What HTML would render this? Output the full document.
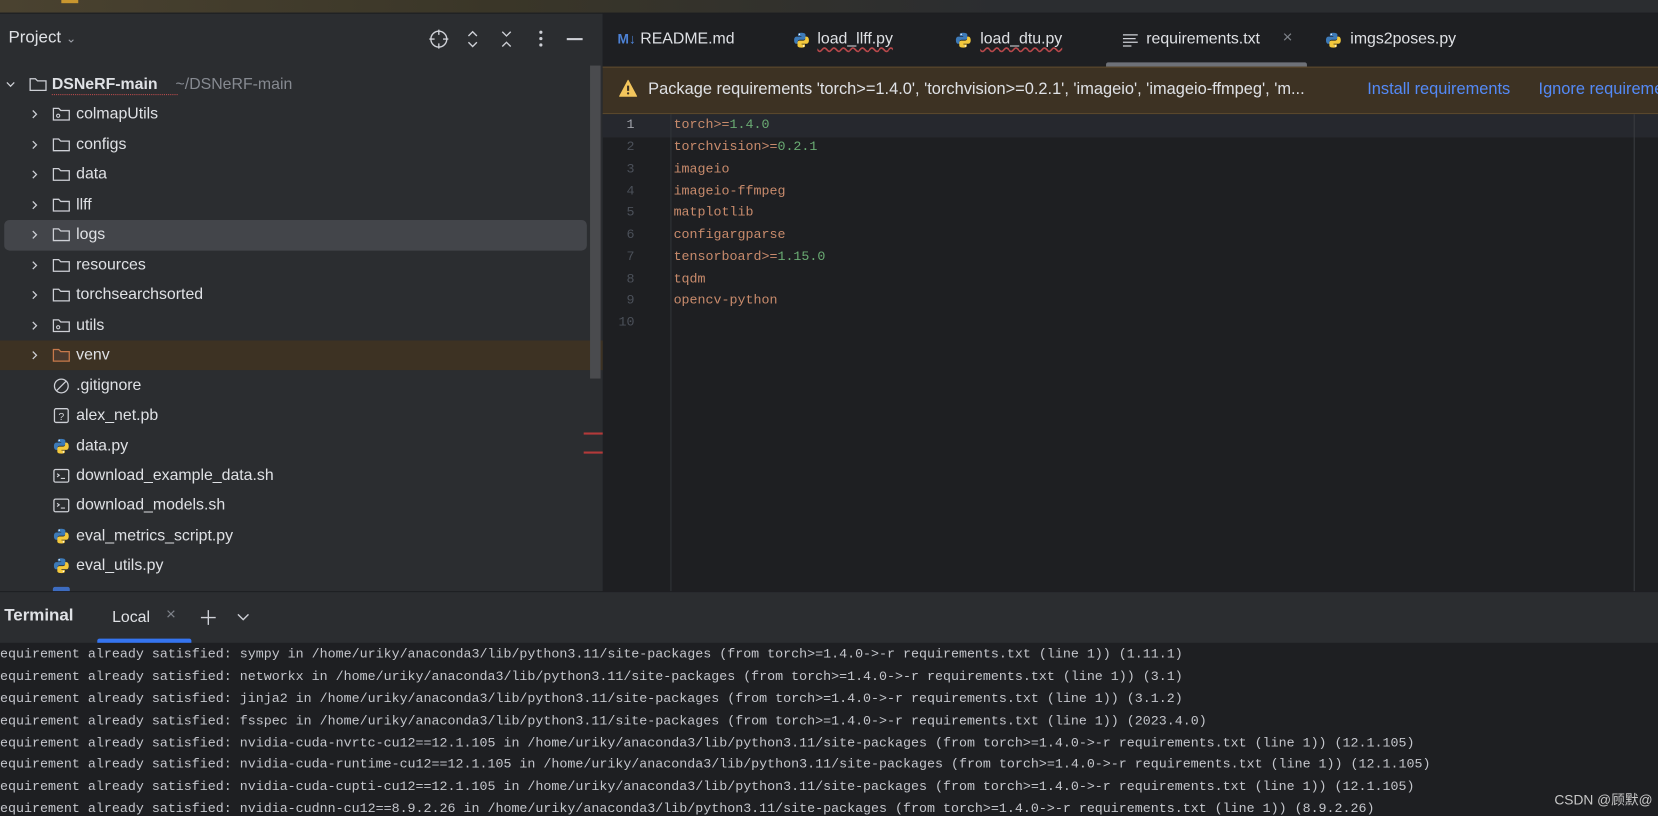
<!DOCTYPE html>
<html><head><meta charset="utf-8"><style>
*{margin:0;padding:0;box-sizing:border-box}
body{width:1658px;height:815px;overflow:hidden;background:#1e1f22;font-family:"Liberation Sans","Noto Sans CJK SC",sans-serif;color:#dfe1e5;position:relative}
#w{position:absolute;left:0;top:0;width:1568px;height:771px;transform:scale(1.0574);transform-origin:0 0}
.a{position:absolute;white-space:nowrap}
.side{left:0;top:13px;width:570px;height:547px;background:#2b2d30}
.row{position:absolute;left:0;width:570px;height:28px;font-size:15px;line-height:28px}
.row svg{position:absolute;top:6px}
.mono{font-family:"Liberation Mono",monospace;font-size:12.6px}
.code{left:637px;color:#c88b6c}
.num{color:#6aab73}
.ln{left:570px;width:30px;text-align:right;color:#4b5059}
.term{left:0;font-family:"Liberation Mono",monospace;font-size:12.6px;color:#c4c6cc}
.tab{top:28px;font-size:15px;color:#dfe1e5}
</style></head><body>
<svg width="0" height="0" style="position:absolute">
<defs>
<symbol id="fold" viewBox="0 0 18 16"><path d="M1.5 2.5h5l2 2h8v9h-15z" fill="none" stroke="#ced0d6" stroke-width="1.2"/></symbol>
<symbol id="foldo" viewBox="0 0 18 16"><path d="M1.5 2.5h5l2 2h8v9h-15z" fill="#4a3a2e" stroke="#c7794b" stroke-width="1.2"/></symbol>
<symbol id="folds" viewBox="0 0 18 16"><path d="M1.5 2.5h5l2 2h8v9h-15z" fill="none" stroke="#ced0d6" stroke-width="1.2"/><circle cx="6" cy="9.5" r="1.5" fill="none" stroke="#ced0d6"/></symbol>
<symbol id="chev" viewBox="0 0 10 10"><path d="M3 1.5l3.5 3.5-3.5 3.5" fill="none" stroke="#ced0d6" stroke-width="1.2"/></symbol>
<symbol id="py" viewBox="0 0 16 16"><path d="M7.8 1C4.5 1 4.7 2.4 4.7 2.4V4h3.2v.6H3.4S1 4.3 1 7.9s2.1 3.5 2.1 3.5h1.3V9.7s-.1-2.1 2-2.1h3.4s2 0 2-1.9V2.9S12.1 1 7.8 1z" fill="#3d7ab8"/><path d="M8.2 15c3.3 0 3.1-1.4 3.1-1.4V12H8.1v-.6h4.5S15 11.7 15 8.1s-2.1-3.5-2.1-3.5h-1.3v1.7s.1 2.1-2 2.1H6.2s-2 0-2 1.9v2.8S3.9 15 8.2 15z" fill="#f3c83c"/><circle cx="6" cy="2.5" r=".7" fill="#fff"/><circle cx="10" cy="13.5" r=".7" fill="#fff"/></symbol>
<symbol id="sh" viewBox="0 0 16 16"><rect x="1" y="2" width="14" height="12" rx="1.5" fill="none" stroke="#ced0d6" stroke-width="1.2"/><path d="M4 6l2 1.5L4 9M7.5 10.5h4" fill="none" stroke="#ced0d6" stroke-width="1.1"/></symbol>
</defs></svg>
<div id="w">
<div class="a" style="left:0;top:0;width:1568px;height:12px;background:linear-gradient(90deg,#4a4230,#3a3628 30%,#2b2d30 60%,#2b2d30)"></div>
<div class="a" style="left:58px;top:0;width:16px;height:3px;background:#c9962f"></div>
<div class="a" style="left:0;top:12px;width:1568px;height:1px;background:#1e1f22"></div>

<div class="a side"></div>
<div class="a" style="left:8px;top:27px;font-size:16px;color:#dfe1e5">Project <span style="font-size:12px;color:#9da0a8">&#8964;</span></div>
<svg class="a" style="left:405px;top:27px" width="20" height="20" viewBox="0 0 20 20"><circle cx="10" cy="10" r="7.5" fill="none" stroke="#ced0d6" stroke-width="1.3"/><path d="M10 1v5M10 14v5M1 10h5M14 10h5" stroke="#ced0d6" stroke-width="1.3"/></svg>
<svg class="a" style="left:440px;top:28px" width="14" height="18" viewBox="0 0 14 18"><path d="M3 6l4-4 4 4M3 12l4 4 4-4" fill="none" stroke="#ced0d6" stroke-width="1.3"/></svg>
<svg class="a" style="left:472px;top:28px" width="14" height="18" viewBox="0 0 14 18"><path d="M3 2l4 4 4-4M3 16l4-4 4 4" fill="none" stroke="#ced0d6" stroke-width="1.3"/></svg>
<div class="a" style="left:510px;top:29px;width:3px;height:3px;background:#ced0d6;border-radius:2px;box-shadow:0 6px 0 #ced0d6,0 12px 0 #ced0d6"></div>
<div class="a" style="left:536px;top:36px;width:15px;height:1.5px;background:#ced0d6"></div>

<div class="a" style="left:4px;top:208px;width:551px;height:29px;background:#43454a;border-radius:5px"></div>
<div class="a" style="left:0;top:322px;width:570px;height:28px;background:#3d3223"></div>
<div class="a" style="left:558px;top:62px;width:10px;height:296px;background:#4a4b4e"></div>
<div class="a" style="left:552px;top:409px;width:18px;height:2px;background:#b33a3a"></div>
<div class="a" style="left:552px;top:427px;width:18px;height:2px;background:#b33a3a"></div>

<div class="row" style="top:66px"><svg style="left:5px;top:9px;transform:rotate(90deg)" width="10" height="10"><use href="#chev"/></svg><svg style="left:27px" width="18" height="16"><use href="#fold"/></svg><span class="a" style="left:49px;font-weight:bold">DSNeRF-main</span><span class="a" style="left:166px;color:#868a91">~/DSNeRF-main</span><div class="a" style="left:49px;top:22px;width:119px;height:2px;border-bottom:1px dotted #c94f4f"></div></div>
<div class="row" style="top:94px"><svg style="left:28px;top:9px" width="10" height="10"><use href="#chev"/></svg><svg style="left:49px" width="18" height="16"><use href="#folds"/></svg><span class="a" style="left:72px">colmapUtils</span></div>
<div class="row" style="top:123px"><svg style="left:28px;top:9px" width="10" height="10"><use href="#chev"/></svg><svg style="left:49px" width="18" height="16"><use href="#fold"/></svg><span class="a" style="left:72px">configs</span></div>
<div class="row" style="top:151px"><svg style="left:28px;top:9px" width="10" height="10"><use href="#chev"/></svg><svg style="left:49px" width="18" height="16"><use href="#fold"/></svg><span class="a" style="left:72px">data</span></div>
<div class="row" style="top:180px"><svg style="left:28px;top:9px" width="10" height="10"><use href="#chev"/></svg><svg style="left:49px" width="18" height="16"><use href="#fold"/></svg><span class="a" style="left:72px">llff</span></div>
<div class="row" style="top:208px"><svg style="left:28px;top:9px" width="10" height="10"><use href="#chev"/></svg><svg style="left:49px" width="18" height="16"><use href="#fold"/></svg><span class="a" style="left:72px">logs</span></div>
<div class="row" style="top:237px"><svg style="left:28px;top:9px" width="10" height="10"><use href="#chev"/></svg><svg style="left:49px" width="18" height="16"><use href="#fold"/></svg><span class="a" style="left:72px">resources</span></div>
<div class="row" style="top:265px"><svg style="left:28px;top:9px" width="10" height="10"><use href="#chev"/></svg><svg style="left:49px" width="18" height="16"><use href="#fold"/></svg><span class="a" style="left:72px">torchsearchsorted</span></div>
<div class="row" style="top:294px"><svg style="left:28px;top:9px" width="10" height="10"><use href="#chev"/></svg><svg style="left:49px" width="18" height="16"><use href="#folds"/></svg><span class="a" style="left:72px">utils</span></div>
<div class="row" style="top:322px"><svg style="left:28px;top:9px" width="10" height="10"><use href="#chev"/></svg><svg style="left:49px" width="18" height="16"><use href="#foldo"/></svg><span class="a" style="left:72px">venv</span></div>
<div class="row" style="top:351px"><svg style="left:50px" width="16" height="16" viewBox="0 0 16 16"><circle cx="8" cy="8" r="6.5" fill="none" stroke="#ced0d6" stroke-width="1.2"/><path d="M3.5 12.5l9-9" stroke="#ced0d6" stroke-width="1.2"/></svg><span class="a" style="left:72px">.gitignore</span></div>
<div class="row" style="top:379px"><svg style="left:50px" width="16" height="16" viewBox="0 0 16 16"><rect x="1.5" y="1.5" width="13" height="13" rx="1.5" fill="none" stroke="#ced0d6" stroke-width="1.2"/><text x="8" y="12" font-size="10" fill="#ced0d6" text-anchor="middle" font-family="Liberation Sans">?</text></svg><span class="a" style="left:72px">alex_net.pb</span></div>
<div class="row" style="top:408px"><svg style="left:50px" width="16" height="16"><use href="#py"/></svg><span class="a" style="left:72px">data.py</span></div>
<div class="row" style="top:436px"><svg style="left:50px" width="16" height="16"><use href="#sh"/></svg><span class="a" style="left:72px">download_example_data.sh</span></div>
<div class="row" style="top:464px"><svg style="left:50px" width="16" height="16"><use href="#sh"/></svg><span class="a" style="left:72px">download_models.sh</span></div>
<div class="row" style="top:493px"><svg style="left:50px" width="16" height="16"><use href="#py"/></svg><span class="a" style="left:72px">eval_metrics_script.py</span></div>
<div class="row" style="top:521px"><svg style="left:50px" width="16" height="16"><use href="#py"/></svg><span class="a" style="left:72px">eval_utils.py</span></div>
<div class="a" style="left:50px;top:555px;width:16px;height:5px;background:#3d6cc0;border-radius:2px 2px 0 0"></div>

<div class="a" style="left:570px;top:13px;width:998px;height:50px;background:#1e1f22"></div>
<div class="a tab" style="left:584px"><span style="color:#4d82d6;font-weight:bold;font-size:13px">M&#8595;</span> README.md</div>
<svg class="a" style="left:750px;top:30px" width="16" height="16"><use href="#py"/></svg>
<div class="a tab" style="left:773px;text-decoration:underline wavy #b8484b;text-underline-offset:3px">load_llff.py</div>
<svg class="a" style="left:903px;top:30px" width="16" height="16"><use href="#py"/></svg>
<div class="a tab" style="left:927px;text-decoration:underline wavy #b8484b;text-underline-offset:3px">load_dtu.py</div>
<svg class="a" style="left:1061px;top:31px" width="16" height="14" viewBox="0 0 16 14"><path d="M1 2h14M1 5.5h12M1 9h14M1 12.5h8" stroke="#ced0d6" stroke-width="1.2"/></svg>
<div class="a tab" style="left:1084px">requirements.txt</div>
<div class="a" style="left:1213px;top:27px;color:#7f838a;font-size:16px">&#215;</div>
<svg class="a" style="left:1253px;top:30px" width="16" height="16"><use href="#py"/></svg>
<div class="a tab" style="left:1277px">imgs2poses.py</div>
<div class="a" style="left:1046px;top:59px;width:190px;height:4px;background:#6e7178;border-radius:2px 2px 0 0"></div>

<div class="a" style="left:570px;top:63px;width:998px;height:45px;background:#3d3223;border-top:1px solid #5e4b2f;border-bottom:1px solid #5e4b2f"></div>
<svg class="a" style="left:585px;top:75px" width="18" height="17" viewBox="0 0 18 17"><path d="M9 1L17 16H1z" fill="#f2c55c" stroke="#f2c55c" stroke-linejoin="round"/><path d="M9 6v5" stroke="#3d3223" stroke-width="2"/><circle cx="9" cy="13.3" r="1.1" fill="#3d3223"/></svg>
<div class="a" style="left:613px;top:76px;font-size:15.5px;color:#dfe1e5">Package requirements 'torch&gt;=1.4.0', 'torchvision&gt;=0.2.1', 'imageio', 'imageio-ffmpeg', 'm...</div>
<div class="a" style="left:1293px;top:76px;font-size:15.5px;color:#548af7">Install requirements</div>
<div class="a" style="left:1455px;top:76px;font-size:15.5px;color:#548af7">Ignore requirements</div>

<div class="a" style="left:570px;top:108px;width:998px;height:22px;background:#26282e"></div>
<div class="a" style="left:634px;top:108px;width:1px;height:452px;background:#313438"></div>
<div class="a" style="left:1545px;top:108px;width:1px;height:452px;background:#393b40"></div>
<div class="a mono ln" style="top:111px;color:#a1a3ab">1</div>
<div class="a mono ln" style="top:132px">2</div>
<div class="a mono ln" style="top:153px">3</div>
<div class="a mono ln" style="top:174px">4</div>
<div class="a mono ln" style="top:194px">5</div>
<div class="a mono ln" style="top:215px">6</div>
<div class="a mono ln" style="top:236px">7</div>
<div class="a mono ln" style="top:257px">8</div>
<div class="a mono ln" style="top:277px">9</div>
<div class="a mono ln" style="top:298px">10</div>
<div class="a mono code" style="top:111px">torch&gt;=<span class="num">1.4.0</span></div>
<div class="a mono code" style="top:132px">torchvision&gt;=<span class="num">0.2.1</span></div>
<div class="a mono code" style="top:153px">imageio</div>
<div class="a mono code" style="top:174px">imageio-ffmpeg</div>
<div class="a mono code" style="top:194px">matplotlib</div>
<div class="a mono code" style="top:215px">configargparse</div>
<div class="a mono code" style="top:236px">tensorboard&gt;=<span class="num">1.15.0</span></div>
<div class="a mono code" style="top:257px">tqdm</div>
<div class="a mono code" style="top:277px">opencv-python</div>

<div class="a" style="left:0;top:559px;width:1568px;height:1px;background:#1e1f22"></div>
<div class="a" style="left:0;top:560px;width:1568px;height:48px;background:#2b2d30"></div>
<div class="a" style="left:4px;top:574px;font-size:16px;font-weight:bold;color:#dfe1e5">Terminal</div>
<div class="a" style="left:106px;top:575px;font-size:15px;color:#dfe1e5">Local</div>
<div class="a" style="left:157px;top:573px;font-size:16px;color:#7f838a">&#215;</div>
<svg class="a" style="left:189px;top:576px" width="16" height="16"><path d="M8 1v14M1 8h14" stroke="#ced0d6" stroke-width="1.3"/></svg>
<svg class="a" style="left:223px;top:579px" width="14" height="10"><path d="M2 2l5 5 5-5" fill="none" stroke="#ced0d6" stroke-width="1.3"/></svg>
<div class="a" style="left:92px;top:604px;width:89px;height:4px;background:#3574f0;border-radius:2px 2px 0 0"></div>
<div class="a" style="left:0;top:608px;width:1568px;height:163px;background:#1e1f22"></div>
<div class="a term" style="top:612px">equirement already satisfied: sympy in /home/uriky/anaconda3/lib/python3.11/site-packages (from torch&gt;=1.4.0-&gt;-r requirements.txt (line 1)) (1.11.1)</div>
<div class="a term" style="top:633px">equirement already satisfied: networkx in /home/uriky/anaconda3/lib/python3.11/site-packages (from torch&gt;=1.4.0-&gt;-r requirements.txt (line 1)) (3.1)</div>
<div class="a term" style="top:654px">equirement already satisfied: jinja2 in /home/uriky/anaconda3/lib/python3.11/site-packages (from torch&gt;=1.4.0-&gt;-r requirements.txt (line 1)) (3.1.2)</div>
<div class="a term" style="top:675px">equirement already satisfied: fsspec in /home/uriky/anaconda3/lib/python3.11/site-packages (from torch&gt;=1.4.0-&gt;-r requirements.txt (line 1)) (2023.4.0)</div>
<div class="a term" style="top:696px">equirement already satisfied: nvidia-cuda-nvrtc-cu12==12.1.105 in /home/uriky/anaconda3/lib/python3.11/site-packages (from torch&gt;=1.4.0-&gt;-r requirements.txt (line 1)) (12.1.105)</div>
<div class="a term" style="top:716px">equirement already satisfied: nvidia-cuda-runtime-cu12==12.1.105 in /home/uriky/anaconda3/lib/python3.11/site-packages (from torch&gt;=1.4.0-&gt;-r requirements.txt (line 1)) (12.1.105)</div>
<div class="a term" style="top:737px">equirement already satisfied: nvidia-cuda-cupti-cu12==12.1.105 in /home/uriky/anaconda3/lib/python3.11/site-packages (from torch&gt;=1.4.0-&gt;-r requirements.txt (line 1)) (12.1.105)</div>
<div class="a term" style="top:758px">equirement already satisfied: nvidia-cudnn-cu12==8.9.2.26 in /home/uriky/anaconda3/lib/python3.11/site-packages (from torch&gt;=1.4.0-&gt;-r requirements.txt (line 1)) (8.9.2.26)</div>
<div class="a" style="left:1470px;top:746px;font-size:13px;color:#c8c8c8">CSDN @顾默@</div>
</div>
</body></html>
